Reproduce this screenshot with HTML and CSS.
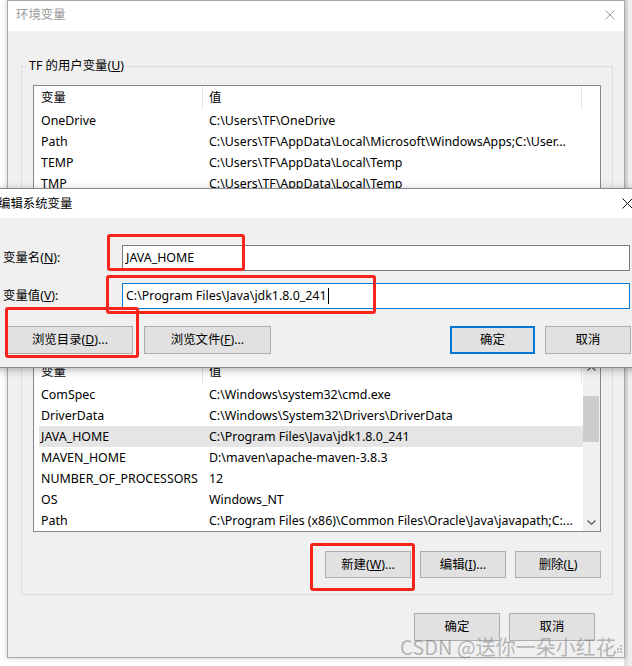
FILE: index.html
```html
<!DOCTYPE html>
<html lang="zh-CN">
<head>
<meta charset="utf-8">
<title>环境变量</title>
<link rel="stylesheet" href="styles.css">
</head>
<body>
<div class="desktop">
  <div class="bg-right"></div>

  <section class="win env">
    <header class="titlebar">
      <span class="title">环境变量</span>
      <svg class="close" width="10" height="10" viewBox="0 0 10 10"><path d="M0.5 0.5L9.5 9.5M9.5 0.5L0.5 9.5" stroke="#9a9a9a" stroke-width="1" fill="none"/></svg>
    </header>
    <div class="win-body">
      <fieldset class="group user">
        <legend>TF 的用户变量(<u>U</u>)</legend>
        <div class="list">
          <div class="list-main">
            <div class="head"><span class="h1">变量</span><span class="h2">值</span></div>
            <div class="row"><span class="c1">OneDrive</span><span class="c2">C:\Users\TF\OneDrive</span></div>
            <div class="row"><span class="c1">Path</span><span class="c2">C:\Users\TF\AppData\Local\Microsoft\WindowsApps;C:\User...</span></div>
            <div class="row"><span class="c1">TEMP</span><span class="c2">C:\Users\TF\AppData\Local\Temp</span></div>
            <div class="row"><span class="c1">TMP</span><span class="c2">C:\Users\TF\AppData\Local\Temp</span></div>
          </div>
        </div>
        <div class="btn-row">
          <span class="btn">新建(<u>N</u>)...</span>
          <span class="btn">编辑(<u>E</u>)...</span>
          <span class="btn">删除(<u>D</u>)</span>
        </div>
      </fieldset>

      <fieldset class="group sys">
        <legend>系统变量(<u>S</u>)</legend>
        <div class="list">
          <div class="list-main">
            <div class="head"><span class="h1">变量</span><span class="h2">值</span></div>
            <div class="row"><span class="c1">ComSpec</span><span class="c2">C:\Windows\system32\cmd.exe</span></div>
            <div class="row"><span class="c1">DriverData</span><span class="c2">C:\Windows\System32\Drivers\DriverData</span></div>
            <div class="row sel"><span class="c1">JAVA_HOME</span><span class="c2">C:\Program Files\Java\jdk1.8.0_241</span></div>
            <div class="row"><span class="c1">MAVEN_HOME</span><span class="c2">D:\maven\apache-maven-3.8.3</span></div>
            <div class="row"><span class="c1">NUMBER_OF_PROCESSORS</span><span class="c2">12</span></div>
            <div class="row"><span class="c1">OS</span><span class="c2">Windows_NT</span></div>
            <div class="row"><span class="c1">Path</span><span class="c2">C:\Program Files (x86)\Common Files\Oracle\Java\javapath;C:...</span></div>
          </div>
          <div class="vscroll">
            <span class="arrow"><svg width="9" height="5" viewBox="0 0 9 5"><path d="M0.5 4.5L4.5 0.8L8.5 4.5" stroke="#606060" stroke-width="1.4" fill="none"/></svg></span>
            <div class="track"><div class="thumb"></div></div>
            <span class="arrow"><svg width="9" height="5" viewBox="0 0 9 5"><path d="M0.5 0.5L4.5 4.2L8.5 0.5" stroke="#606060" stroke-width="1.4" fill="none"/></svg></span>
          </div>
        </div>
        <div class="btn-row">
          <span class="btn">新建(<u>W</u>)...</span>
          <span class="btn">编辑(<u>I</u>)...</span>
          <span class="btn">删除(<u>L</u>)</span>
        </div>
      </fieldset>

      <div class="dlg-buttons">
        <span class="btn big">确定</span>
        <span class="btn big">取消</span>
      </div>
    </div>
    <svg class="grip" width="8" height="8" viewBox="0 0 8 8">
      <rect x="6" y="0" width="2" height="2" fill="#bdbdbd"/>
      <rect x="3" y="3" width="2" height="2" fill="#bdbdbd"/>
      <rect x="6" y="3" width="2" height="2" fill="#bdbdbd"/>
      <rect x="0" y="6" width="2" height="2" fill="#bdbdbd"/>
      <rect x="3" y="6" width="2" height="2" fill="#bdbdbd"/>
      <rect x="6" y="6" width="2" height="2" fill="#bdbdbd"/>
    </svg>
  </section>

  <section class="win edit">
    <header class="titlebar">
      <span class="title">编辑系统变量</span>
      <svg class="close" width="11" height="11" viewBox="0 0 11 11"><path d="M0.5 0.5L10.5 10.5M10.5 0.5L0.5 10.5" stroke="#111" stroke-width="1" fill="none"/></svg>
    </header>
    <div class="edit-body">
      <div class="form">
        <label class="lbl">变量名(<u>N</u>):</label>
        <div class="field">JAVA_HOME</div>
        <label class="lbl">变量值(<u>V</u>):</label>
        <div class="field focus">C:\Program Files\Java\jdk1.8.0_241<span class="caret"></span></div>
      </div>
      <div class="edit-btns">
        <span class="btn wide">浏览目录(<u>D</u>)...</span>
        <span class="btn wide2">浏览文件(<u>F</u>)...</span>
        <span class="spacer"></span>
        <span class="btn ok default">确定</span>
        <span class="btn cancel">取消</span>
      </div>
    </div>
  </section>

  <div class="mark m1"></div>
  <div class="mark m2"></div>
  <div class="mark m3"></div>
  <div class="mark m4"></div>

  <div class="watermark">CSDN @送你一朵小红花</div>
</div>
</body>
</html>
```

FILE: styles.css
```css
* { box-sizing: border-box; }

html, body {
  margin: 0;
  padding: 0;
  width: 632px;
  height: 666px;
  overflow: hidden;
}

body {
  font-family: "Noto Sans", "Noto Sans CJK SC", sans-serif;
  font-size: 12.4px;
  color: #000;
  background: #fff;
}

u { text-decoration: underline; text-underline-offset: 1px; }

.desktop {
  position: relative;
  width: 632px;
  height: 666px;
  overflow: hidden;
  background: #fff;
}

.bg-right {
  position: absolute;
  left: 624px;
  top: 0;
  width: 8px;
  height: 666px;
  background: #efefef;
  border-left: 4px solid #e2e2e2;
}

/* windows */
.win {
  position: absolute;
  border: 1px solid #a9a9a9;
  background: #f0f0f0;
  display: flex;
  flex-direction: column;
}

.env {
  left: 7px;
  top: 0;
  width: 618px;
  height: 658px;
  box-shadow: 0 0 5px rgba(0, 0, 0, 0.22);
}

.titlebar {
  flex: none;
  background: #fff;
  display: flex;
  align-items: center;
  justify-content: space-between;
  line-height: 16px;
}

.env .titlebar {
  height: 30px;
  padding: 0 9px 2px 8px;
  color: #9a9a9a;
}

.win-body {
  flex: 1;
  display: flex;
  flex-direction: column;
}

/* group boxes */
.group {
  margin: 0 11px 0 13px;
  padding: 11px 11px 16px;
  border: 1px solid #dcdcdc;
  min-width: 0;
}

.group.user { margin-top: 27px; }
.group.sys { margin-top: 11px; }

.group legend {
  padding: 0 2px;
  margin-left: -6px;
  line-height: 16px;
}

/* list view */
.list {
  display: flex;
  height: 173px;
  background: #fff;
  border: 1px solid #828790;
  overflow: hidden;
}

.list-main {
  flex: 1;
  min-width: 0;
}

.head {
  display: flex;
  height: 24px;
  line-height: 24px;
}

.head .h1 {
  width: 169px;
  padding-left: 7px;
  border-right: 1px solid #e5e5e5;
}

.head .h2 {
  width: 379px;
  padding-left: 6px;
  border-right: 1px solid #e5e5e5;
}

.row {
  display: flex;
  height: 21px;
  line-height: 21px;
  margin-left: 5px;
  white-space: nowrap;
}

.row .c1 {
  width: 164px;
  flex: none;
  padding-left: 2px;
  overflow: hidden;
}

.row .c2 {
  flex: 1;
  padding-left: 6px;
  overflow: hidden;
}

.row.sel { background: #e5e5e5; }

.vscroll {
  width: 17px;
  flex: none;
  background: #f0f0f0;
  display: flex;
  flex-direction: column;
}

.arrow {
  height: 17px;
  flex: none;
  display: flex;
  align-items: center;
  justify-content: center;
}

.track {
  flex: 1;
  padding-top: 19px;
}

.thumb {
  height: 46px;
  margin: 0 1px 0 0;
  background: #cdcdcd;
}

/* buttons */
.btn {
  display: flex;
  align-items: center;
  justify-content: center;
  height: 27px;
  width: 86px;
  flex: none;
  line-height: 16px;
  background: #e1e1e1;
  border: 1px solid #adadad;
  white-space: nowrap;
}

.btn-row {
  display: flex;
  justify-content: flex-end;
  gap: 9px;
  margin-top: 19px;
}

.dlg-buttons {
  display: flex;
  justify-content: flex-end;
  gap: 9px;
  margin-top: 18px;
  padding-right: 29px;
}

.btn.big { height: 28px; }

.grip {
  position: absolute;
  right: 2px;
  bottom: 4px;
}

/* edit dialog */
.edit {
  left: -9px;
  top: 188px;
  width: 660px;
  height: 180px;
  border-color: #8a8a8a;
  box-shadow: 0 2px 8px rgba(0, 0, 0, 0.3);
}

.edit .titlebar {
  height: 29px;
  padding: 0 17px 0 6px;
}

.edit-body {
  flex: 1;
  padding: 27px 19px 0 11px;
}

.form {
  display: grid;
  grid-template-columns: 119px 508px;
  row-gap: 12px;
  align-items: center;
  line-height: 16px;
}

.field {
  height: 26px;
  line-height: 24px;
  padding: 0 3px;
  background: #fff;
  border: 1px solid #7a7a7a;
  white-space: nowrap;
}

.field.focus { border-color: #0078d7; }

.caret {
  display: inline-block;
  width: 1px;
  height: 16px;
  margin-left: 1px;
  vertical-align: -4px;
  background: #000;
}

.edit-btns {
  display: flex;
  margin-top: 17px;
  margin-left: 4px;
}

.edit-btns .btn { height: 28px; }
.edit-btns .wide { width: 126px; }
.edit-btns .wide2 { width: 127px; margin-left: 11px; }
.edit-btns .spacer { flex: 1; }
.edit-btns .ok { width: 85px; }
.edit-btns .cancel { width: 86px; margin-left: 10px; }
.btn.default { border: 2px solid #0078d7; }

/* annotations */
.mark {
  position: absolute;
  border: 3px solid #f5251c;
  border-radius: 3px;
}

.m1 { left: 107px; top: 234px; width: 138px; height: 37px; }
.m2 { left: 106px; top: 275px; width: 270px; height: 39px; }
.m3 { left: 5px; top: 307px; width: 134px; height: 51px; }
.m4 { left: 310px; top: 543px; width: 105px; height: 48px; }

.watermark {
  position: absolute;
  left: 400px;
  top: 634px;
  font-family: "Noto Sans CJK SC", sans-serif;
  font-size: 20px;
  line-height: 26px;
  color: rgba(120, 120, 120, 0.5);
  white-space: nowrap;
}
```
